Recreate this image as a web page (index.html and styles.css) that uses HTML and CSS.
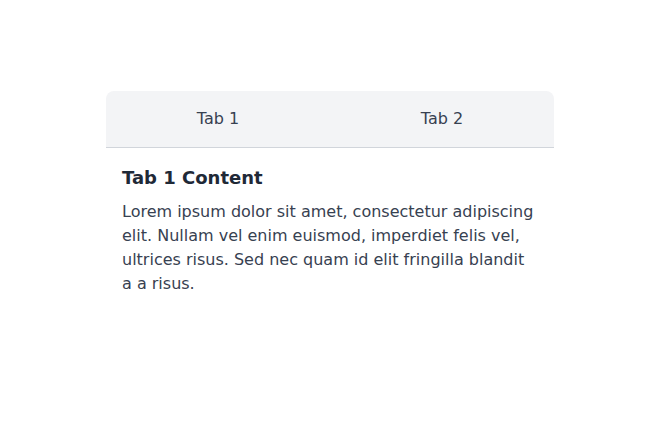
FILE: index.html
```html
<!DOCTYPE html>
<html>
<head>
<meta charset="utf-8">
<link rel="stylesheet" href="styles.css">
</head>
<body>
<div class="card">
  <div class="tabs">
    <button class="tab active">Tab 1</button>
    <button class="tab">Tab 2</button>
  </div>
  <div class="content">
    <h2 class="title">Tab 1 Content</h2>
    <p class="text">Lorem ipsum dolor sit amet, consectetur adipiscing elit. Nullam vel enim euismod, imperdiet felis vel, ultrices risus. Sed nec quam id elit fringilla blandit a a risus.</p>
  </div>
</div>
</body>
</html>
```
FILE: styles.css
```css
* { box-sizing: border-box; }
html, body { margin: 0; padding: 0; background: #ffffff; }
body {
  font-family: "DejaVu Sans", sans-serif;
  width: 667px;
  height: 427px;
}
.card {
  width: 448px;
  margin: 91px 0 0 106px;
}
.tabs {
  display: flex;
  background: #f3f4f6;
  border-top-left-radius: 8px;
  border-top-right-radius: 8px;
  border-bottom: 1px solid #d1d5db;
}
.tab {
  flex: 1;
  border: 0;
  background: transparent;
  font-family: "DejaVu Sans", sans-serif;
  font-size: 16px;
  line-height: 24px;
  color: #374151;
  padding: 16px 0;
  margin: 0;
}
.content { padding: 16px; }
.title {
  margin: 0 0 8px 0;
  font-size: 18px;
  line-height: 28px;
  font-weight: bold;
  color: #1f2937;
}
.text {
  margin: 0;
  font-size: 16px;
  line-height: 24px;
  color: #374151;
}
```
